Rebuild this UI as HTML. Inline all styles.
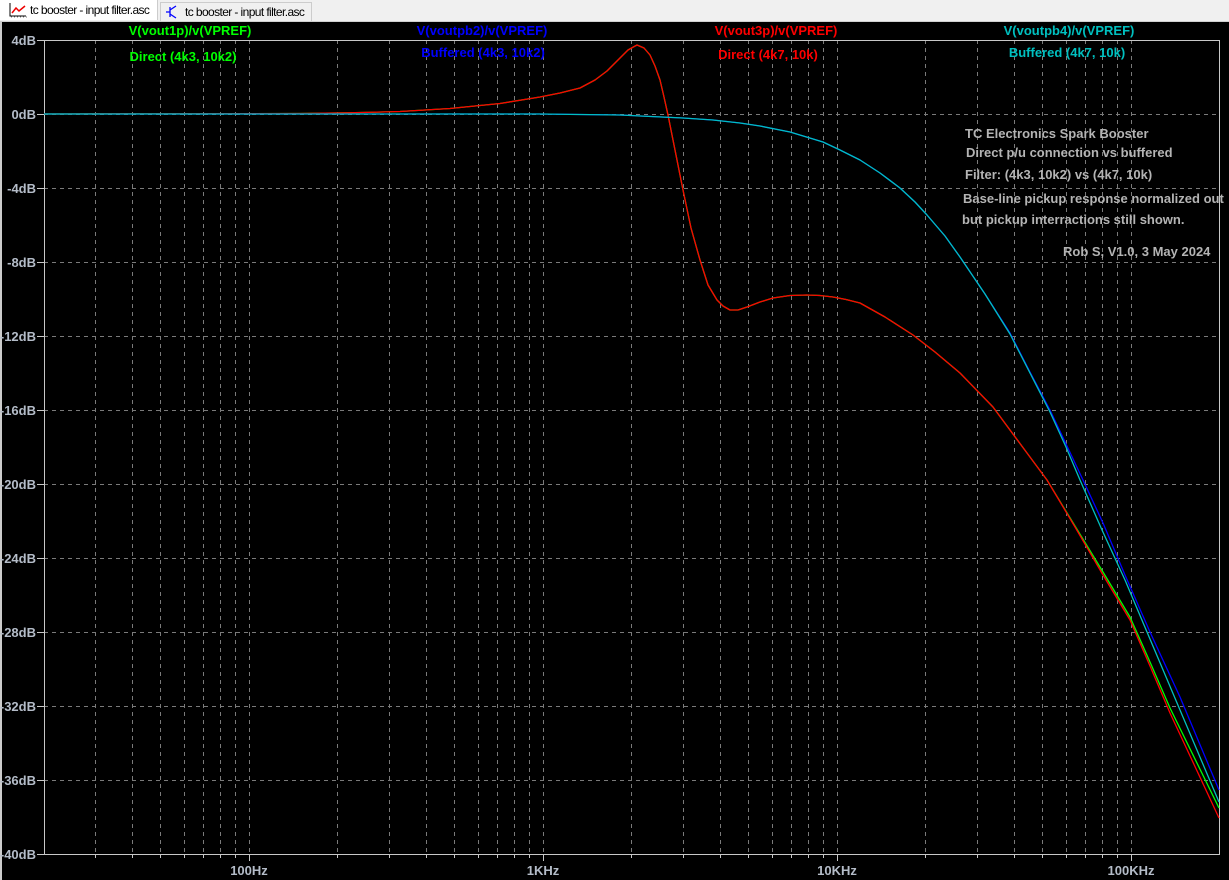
<!DOCTYPE html>
<html><head><meta charset="utf-8"><style>
html,body{margin:0;padding:0;width:1229px;height:880px;overflow:hidden;background:#000;font-family:"Liberation Sans",Arial,sans-serif}
.tabs{position:absolute;left:0;top:0;width:1229px;height:21px;background:#f0f0f0;border-bottom:1px solid #d0d0d0}
.tab{position:absolute;top:0;height:20px;font-size:12px;line-height:20px;color:#000;white-space:nowrap;overflow:hidden}
</style></head><body>
<div class="tabs">
 <div class="tab" style="left:0;width:157px;background:#fff;border-right:1px solid #ccc">
  <svg width="22" height="18" style="position:absolute;left:8px;top:1px"><path d="M2 2V15H18" stroke="#000" fill="none"/><path d="M4 12L8 7L11 10L17 5" stroke="#e00" stroke-width="1.5" fill="none"/><path d="M3 16H19" stroke="#777" stroke-dasharray="1 2"/></svg>
  <span style="position:absolute;left:30px;letter-spacing:-0.6px">tc booster - input filter.asc</span></div>
 <div class="tab" style="left:160px;width:150px;background:#f0f0f0;border:1px solid #ccc;border-bottom:none;top:2px;height:18px;line-height:18px">
  <svg width="16" height="16" style="position:absolute;left:3px;top:1px"><path d="M2 8H6M6 3V13M6 6L12 2M6 10L12 14" stroke="#00f" stroke-width="1.3" fill="none"/></svg>
  <span style="position:absolute;left:24px;letter-spacing:-0.6px">tc booster - input filter.asc</span></div>
</div>
<div style="position:absolute;left:0;top:21px;width:2px;height:859px;background:#ccc"></div>
<svg width="1229" height="880" style="position:absolute;left:0;top:0" font-family="Liberation Sans, Arial, sans-serif" font-weight="bold" font-size="13">
<g stroke="#7a7a7a" stroke-width="1" stroke-dasharray="4 4" fill="none">
<path d="M95.5 40V854M132.5 40V854M160.5 40V854M184.5 40V854M203.5 40V854M220.5 40V854M235.5 40V854M249.5 40V854M337.5 40V854M389.5 40V854M426.5 40V854M454.5 40V854M478.5 40V854M497.5 40V854M514.5 40V854M529.5 40V854M543.5 40V854M631.5 40V854M683.5 40V854M720.5 40V854M748.5 40V854M772.5 40V854M791.5 40V854M808.5 40V854M823.5 40V854M837.5 40V854M925.5 40V854M977.5 40V854M1014.5 40V854M1042.5 40V854M1066.5 40V854M1085.5 40V854M1102.5 40V854M1117.5 40V854M1131.5 40V854"/>
<path d="M44 114.5H1219M44 188.5H1219M44 262.5H1219M44 336.5H1219M44 410.5H1219M44 484.5H1219M44 558.5H1219M44 632.5H1219M44 706.5H1219M44 780.5H1219"/>
</g>
<g stroke="#c8c8c8" stroke-width="1" fill="none">
<path d="M44.5 40V854.5H1219.5V40M44 40.5H1219"/>
<path d="M37 40.5H44M37 114.5H44M37 188.5H44M37 262.5H44M37 336.5H44M37 410.5H44M37 484.5H44M37 558.5H44M37 632.5H44M37 706.5H44M37 780.5H44M37 854.5H44"/>
<path d="M95.5 854V858M132.5 854V858M160.5 854V858M184.5 854V858M203.5 854V858M220.5 854V858M235.5 854V858M249.5 854V861M337.5 854V858M389.5 854V858M426.5 854V858M454.5 854V858M478.5 854V858M497.5 854V858M514.5 854V858M529.5 854V858M543.5 854V861M631.5 854V858M683.5 854V858M720.5 854V858M748.5 854V858M772.5 854V858M791.5 854V858M808.5 854V858M823.5 854V858M837.5 854V861M925.5 854V858M977.5 854V858M1014.5 854V858M1042.5 854V858M1066.5 854V858M1085.5 854V858M1102.5 854V858M1117.5 854V858M1131.5 854V861"/>
</g>
<g fill="#b4bcc8" text-anchor="end">
<text x="36" y="45">4dB</text><text x="36" y="119">0dB</text><text x="36" y="193">-4dB</text><text x="36" y="267">-8dB</text><text x="36" y="341">-12dB</text><text x="36" y="415">-16dB</text><text x="36" y="489">-20dB</text><text x="36" y="563">-24dB</text><text x="36" y="637">-28dB</text><text x="36" y="711">-32dB</text><text x="36" y="785">-36dB</text><text x="36" y="859">-40dB</text>
</g>
<g fill="#b4bcc8" text-anchor="middle">
<text x="249" y="875">100Hz</text><text x="543" y="875">1KHz</text><text x="837" y="875">10KHz</text><text x="1131" y="875">100KHz</text>
</g>
<g text-anchor="middle">
<text x="190" y="35" fill="#00ff00">V(vout1p)/v(VPREF)</text><text x="183" y="61" fill="#00ff00">Direct (4k3, 10k2)</text>
<text x="482" y="35" fill="#0000ff">V(voutpb2)/v(VPREF)</text><text x="483" y="57" fill="#0000ff">Buffered (4k3, 10k2)</text>
<text x="776" y="35" fill="#ff0000">V(vout3p)/v(VPREF)</text><text x="768" y="59" fill="#ff0000">Direct (4k7, 10k)</text>
<text x="1069" y="35" fill="#00c0c0">V(voutpb4)/v(VPREF)</text><text x="1067" y="57" fill="#00c0c0">Buffered (4k7, 10k)</text>
</g>
<g fill="#b4b4b4">
<text x="965" y="138">TC Electronics  Spark Booster</text>
<text x="966" y="157">Direct p/u connection vs buffered</text>
<text x="965" y="179">Filter: (4k3, 10k2) vs (4k7, 10k)</text>
<text x="963" y="203">Base-line pickup response normalized out</text>
<text x="962" y="224">but pickup interractions still shown.</text>
<text x="1063" y="256">Rob S, V1.0, 3 May 2024</text>
</g>
<g fill="none" stroke-width="1.3" stroke-linejoin="round">
<polyline stroke="#00ff00" points="44,114 300,113.5 350,112.8 400,111.5 450,108.5 500,103.5 540,97 560,93 580,88 595,80 607,71 618,60 628,50 637,45 644,48 650,55 655,66 660,80 664,97 668,115 675,150 683,190 691,228 700,260 708,285 717,300 723,306 730,310 738,310 747,307 760,302 773,298 790,295.5 807,295 820,295.5 833,297 846,299.5 860,303 885,317 913,335 935,352 960,373 993,407 1027,453 1047,480 1075,526 1103,572 1130,617 1150,662 1170,708 1219,808"/>
<polyline stroke="#ff0000" points="44,114 300,113.5 350,112.8 400,111.5 450,108.5 500,103.5 540,97 560,93 580,88 595,80 607,71 618,60 628,50 637,45 644,48 650,55 655,66 660,80 664,97 668,115 675,150 683,190 691,228 700,260 708,285 717,300 723,306 730,310 738,310 747,307 760,302 773,298 790,295.5 807,295 820,295.5 833,297 846,299.5 860,303 885,317 913,335 935,352 960,373 993,407 1027,453 1047,480 1075,527 1103,575 1130,620 1150,666 1170,713 1219,818"/>
<polyline stroke="#0000ff" points="44,114 540,114 620,115 683,118 713,120 740,123 760,126 790,132 823,142 840,150 860,160 880,173 900,188 915,202 927,215 945,236 960,257 985,294 1010,333 1030,372 1050,410 1067,446 1083,480 1103,523 1125,575 1150,632 1180,697 1219,790"/>
<polyline stroke="#00c0c0" points="44,114 540,114 620,115 683,118 713,120 740,123 760,126 790,132 823,142 840,150 860,160 880,173 900,188 915,202 927,215 945,236 960,257 985,294 1010,334 1030,373 1050,412 1066,447 1080,480 1102,530 1125,580 1147,632 1180,710 1219,802"/>
</g>
</svg>
</body></html>
